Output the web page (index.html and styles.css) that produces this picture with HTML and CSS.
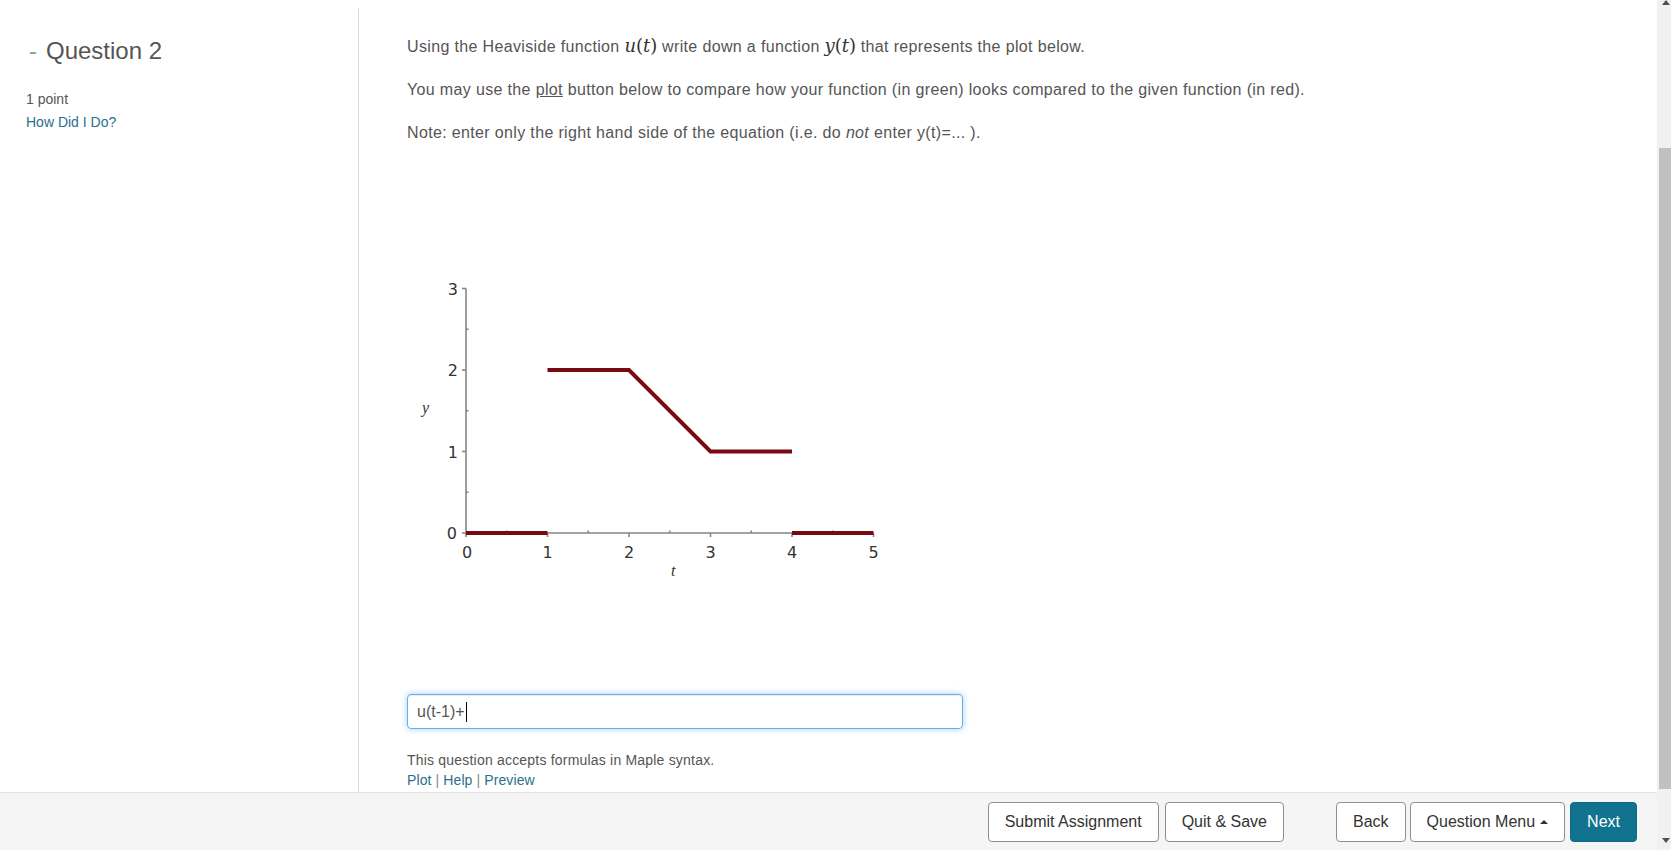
FILE: index.html
```html
<!DOCTYPE html>
<html>
<head>
<meta charset="utf-8">
<title>Question 2</title>
<link rel="stylesheet" href="styles.css">
</head>
<body>
<div class="window">
  <div class="page">
    <div class="main">
      <aside class="side">
        <h2 class="qtitle"><span class="dash">-</span>Question 2</h2>
        <div class="points">1 point</div>
        <a class="link how">How Did I Do?</a>
      </aside>
      <section class="content">
        <p class="para">Using the Heaviside function <span class="math"><i>u</i>(<i>t</i>)</span> write down a function <span class="math"><i>y</i>(<i>t</i>)</span> that represents the plot below.</p>
        <p class="para">You may use the <u>plot</u> button below to compare how your function (in green) looks compared to the given function (in red).</p>
        <p class="para">Note: enter only the right hand side of the equation (i.e. do <i>not</i> enter y(t)=... ).</p>
        <svg class="plot" width="480" height="320" viewBox="0 0 480 320">
          <g class="axis">
            <line x1="59" y1="17.5" x2="59" y2="262"/>
            <line x1="59" y1="262" x2="466.5" y2="262"/>
            <line x1="55" y1="17.5" x2="59" y2="17.5"/>
            <line x1="55" y1="99" x2="59" y2="99"/>
            <line x1="55" y1="180.5" x2="59" y2="180.5"/>
            <line x1="55" y1="262" x2="59" y2="262"/>
            <line x1="59" y1="58.25" x2="61.5" y2="58.25"/>
            <line x1="59" y1="139.75" x2="61.5" y2="139.75"/>
            <line x1="59" y1="221.25" x2="61.5" y2="221.25"/>
            <line x1="59" y1="262" x2="59" y2="266"/>
            <line x1="140.5" y1="262" x2="140.5" y2="266"/>
            <line x1="222" y1="262" x2="222" y2="266"/>
            <line x1="303.5" y1="262" x2="303.5" y2="266"/>
            <line x1="385" y1="262" x2="385" y2="266"/>
            <line x1="466.5" y1="262" x2="466.5" y2="266"/>
            <line x1="99.75" y1="259.5" x2="99.75" y2="262"/>
            <line x1="181.25" y1="259.5" x2="181.25" y2="262"/>
            <line x1="262.75" y1="259.5" x2="262.75" y2="262"/>
            <line x1="344.25" y1="259.5" x2="344.25" y2="262"/>
            <line x1="425.75" y1="259.5" x2="425.75" y2="262"/>
          </g>
          <g class="curve">
            <polyline points="59,262 140.5,262"/>
            <polyline points="140.5,99 222,99 303.5,180.5 385,180.5"/>
            <polyline points="385,262 466.5,262"/>
          </g>
          <g class="ticklabel ylab">
            <text x="51" y="23.5">3</text>
            <text x="51" y="105">2</text>
            <text x="51" y="186.5">1</text>
            <text x="50" y="268">0</text>
          </g>
          <g class="ticklabel xlab">
            <text x="60" y="287">0</text>
            <text x="140.5" y="287">1</text>
            <text x="222" y="287">2</text>
            <text x="303.5" y="287">3</text>
            <text x="385" y="287">4</text>
            <text x="466.5" y="287">5</text>
          </g>
          <text class="varlab" x="264" y="305">t</text>
          <text class="varlab" x="15" y="142">y</text>
        </svg>
        <div class="answer"><span class="typed">u(t-1)+</span><span class="caret"></span></div>
        <div class="hint">This question accepts formulas in Maple syntax.</div>
        <div class="tools"><a class="link">Plot</a> <span class="sep">|</span> <a class="link">Help</a> <span class="sep">|</span> <a class="link">Preview</a></div>
      </section>
    </div>
    <footer class="footer">
      <div class="btn-group">
        <button class="btn">Submit Assignment</button>
        <button class="btn">Quit &amp; Save</button>
      </div>
      <div class="btn-group nav">
        <button class="btn">Back</button>
        <button class="btn qmenu">Question Menu <span class="caret-up"></span></button>
        <button class="btn primary">Next</button>
      </div>
    </footer>
  </div>
  <div class="scrollbar">
    <div class="arrow up"></div>
    <div class="thumb"></div>
    <div class="arrow down"></div>
  </div>
</div>
</body>
</html>
```

FILE: styles.css
```css
html, body {
  margin: 0;
  padding: 0;
  height: 100%;
  background: #ffffff;
  font-family: "Liberation Sans", Arial, sans-serif;
  color: #555555;
}

.window {
  display: flex;
  height: 850px;
  overflow: hidden;
}

.page {
  flex: 1;
  display: flex;
  flex-direction: column;
  min-width: 0;
}

.main {
  flex: 1;
  display: flex;
  padding-top: 8px;
  min-height: 0;
}

.side {
  width: 359px;
  border-right: 1px solid #dddddd;
  padding: 29px 0 0 26px;
  box-sizing: border-box;
  flex: none;
}

.qtitle {
  margin: 0;
  font-size: 24px;
  line-height: 28px;
  font-weight: normal;
  color: #555555;
  margin-left: 3px;
}

.dash {
  color: #999999;
  margin-right: 9px;
}

.points {
  margin-top: 24px;
  font-size: 14px;
  line-height: 20px;
  color: #555555;
}

.link {
  color: #2b6f8c;
  text-decoration: none;
  cursor: pointer;
}

.how {
  display: block;
  margin-top: 3px;
  font-size: 14px;
  line-height: 20px;
}

.content {
  flex: 1;
  padding: 28px 0 0 48px;
}

.para {
  margin: 0 0 21px 0;
  font-size: 16px;
  line-height: 22px;
  letter-spacing: 0.35px;
  color: #555555;
}

.para u {
  text-decoration: underline;
}

.math {
  font-family: "DejaVu Serif", "Liberation Serif", serif;
  font-size: 18px;
  line-height: 1;
  letter-spacing: 0;
  color: #333333;
}

.plot {
  display: block;
  margin-top: 127px;
}

.axis line {
  stroke: #858585;
  stroke-width: 1.6;
}

.curve polyline {
  fill: none;
  stroke: #7a0a12;
  stroke-width: 4;
  stroke-linejoin: miter;
}

.ticklabel text {
  font-family: "DejaVu Sans", sans-serif;
  font-size: 16px;
  fill: #333333;
}

.ylab text {
  text-anchor: end;
}

.xlab text {
  text-anchor: middle;
}

.varlab {
  font-family: "Liberation Serif", serif;
  font-style: italic;
  font-size: 16px;
  fill: #333333;
}

.answer {
  margin-top: 103px;
  width: 556px;
  height: 35px;
  box-sizing: border-box;
  border: 1px solid #66afe9;
  border-radius: 4px;
  box-shadow: inset 0 1px 1px rgba(0, 0, 0, 0.075), 0 0 6px rgba(102, 175, 233, 0.6);
  padding: 0 9px;
  display: flex;
  align-items: center;
  font-size: 16px;
  color: #555555;
}

.caret {
  display: inline-block;
  width: 1px;
  height: 20px;
  background: #000000;
  margin-left: 1px;
}

.hint {
  margin-top: 21px;
  font-size: 14px;
  line-height: 20px;
  letter-spacing: 0.2px;
  color: #555555;
}

.tools {
  font-size: 14px;
  line-height: 20px;
  letter-spacing: 0.1px;
  color: #777777;
}

.sep {
  color: #888888;
}

.footer {
  flex: none;
  height: 58px;
  box-sizing: border-box;
  border-top: 1px solid #e3e3e3;
  background: #f5f5f5;
  display: flex;
  justify-content: flex-end;
  align-items: flex-start;
  padding: 9px 20px 0 0;
}

.btn-group {
  display: flex;
  gap: 6px;
}

.btn-group.nav {
  margin-left: 52px;
  gap: 4px;
}

.btn {
  height: 40px;
  padding: 0 16px;
  font-family: "Liberation Sans", Arial, sans-serif;
  font-size: 16px;
  color: #333333;
  background: #ffffff;
  border: 1px solid #8f8f8f;
  border-radius: 4px;
  cursor: pointer;
}

.qmenu {
  display: flex;
  align-items: center;
  gap: 5px;
}

.caret-up {
  display: inline-block;
  width: 0;
  height: 0;
  border-left: 4px solid transparent;
  border-right: 4px solid transparent;
  border-bottom: 4px solid #333333;
}

.btn.primary {
  background: #11738f;
  border-color: #0f6a84;
  color: #ffffff;
  margin-left: 1px;
}

.scrollbar {
  flex: none;
  width: 14px;
  background: #f1f1f1;
  display: flex;
  flex-direction: column;
  align-items: flex-end;
}

.arrow {
  width: 0;
  height: 0;
  border-left: 4px solid transparent;
  border-right: 4px solid transparent;
  margin-right: 1px;
}

.arrow.up {
  border-bottom: 5px solid #505050;
  margin-top: 0;
}

.thumb {
  margin-top: 143px;
  width: 12px;
  height: 641px;
  background: #c1c1c1;
}

.arrow.down {
  border-top: 5px solid #505050;
  margin-top: 49px;
}
```
